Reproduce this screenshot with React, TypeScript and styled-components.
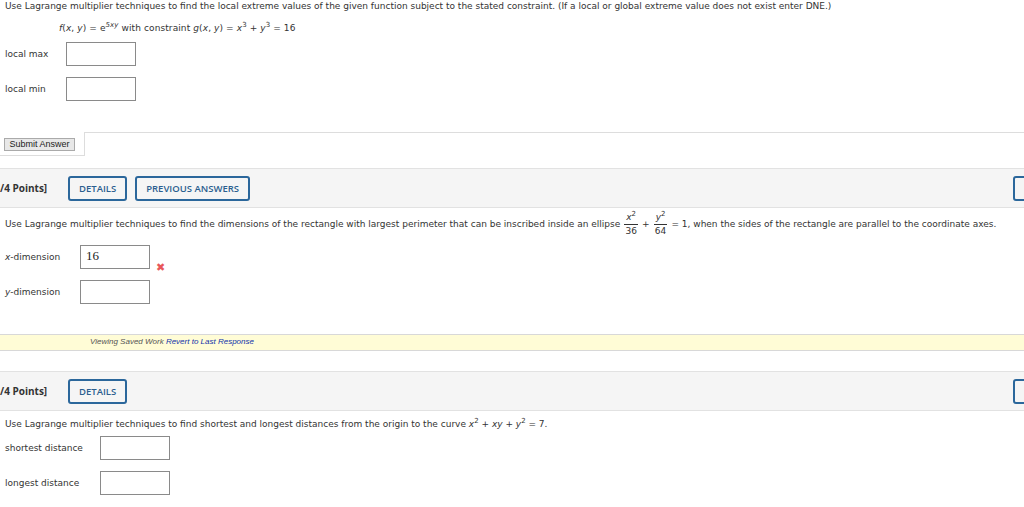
import styled, { createGlobalStyle } from 'styled-components';

const GlobalStyle = createGlobalStyle`
  html, body {
    margin: 0;
    padding: 0;
    background: #fff;
  }
  body {
    font-family: "DejaVu Sans", Verdana, sans-serif;
    color: #333;
    overflow: hidden;
  }
`;

const Page = styled.div`
  width: 1024px;
  height: 507px;
  overflow: hidden;
`;

const Prompt = styled.div<{ $top?: number }>`
  font-size: 9px;
  line-height: 12px;
  padding-left: 5px;
  margin-top: ${p => p.$top ?? 0}px;
  white-space: nowrap;
`;

const Formula = styled.div`
  font-size: 9px;
  line-height: 12px;
  padding-left: 59px;
  margin-top: 10px;
  white-space: nowrap;
  letter-spacing: 0.1px;
`;

const V = styled.i`
  font-style: italic;
`;

const Sup = styled.sup`
  font-size: 7px;
  line-height: 0;
  vertical-align: 4px;
`;

const Answers = styled.div<{ $label: number; $top: number }>`
  display: grid;
  grid-template-columns: ${p => p.$label}px 70px auto;
  row-gap: 11px;
  align-items: center;
  margin-top: ${p => p.$top}px;
  padding-left: 5px;
`;

const Label = styled.div`
  font-size: 9px;
  line-height: 12px;
`;

const Box = styled.div`
  box-sizing: border-box;
  width: 70px;
  height: 24px;
  border: 1px solid #8a8a8a;
  background: #fff;
  font-family: "Liberation Serif", "Times New Roman", serif;
  font-size: 13px;
  line-height: 20px;
  padding-left: 5px;
  color: #222;
`;

const Wrong = styled.span`
  align-self: end;
  margin: 0 0 -4px 6px;
  color: #e8575a;
  font-size: 11px;
  font-weight: bold;
  line-height: 10px;
`;

const SubmitRow = styled.div`
  display: flex;
  margin-top: 31px;
  height: 24px;
`;

const SubmitCell = styled.div`
  box-sizing: border-box;
  display: flex;
  align-items: flex-start;
  width: 85px;
  border-right: 1px solid #ddd;
  border-bottom: 1px solid #ddd;
  padding: 6px 0 0 4px;
`;

const SubmitRest = styled.div`
  flex: 1;
  border-top: 1px solid #ddd;
`;

const SubmitButton = styled.button`
  box-sizing: border-box;
  height: 13px;
  width: 71px;
  padding: 0;
  border: 1px solid #aaa;
  background: #e8e8e8;
  font-family: "Liberation Sans", Arial, sans-serif;
  font-size: 9px;
  line-height: 11px;
  color: #222;
`;

const Band = styled.div<{ $top: number }>`
  box-sizing: border-box;
  display: flex;
  align-items: center;
  height: 40px;
  margin-top: ${p => p.$top}px;
  background: #f5f5f5;
  border-top: 1px solid #e2e2e2;
  border-bottom: 1px solid #e2e2e2;
  overflow: hidden;
  font-family: "Open Sans", sans-serif;
`;

const Points = styled.span`
  font-size: 10px;
  font-weight: 700;
  color: #333;
  width: 68px;
`;

const BlueButton = styled.button<{ $edge?: boolean }>`
  box-sizing: border-box;
  height: 25px;
  padding: 0 9px;
  margin-right: 8px;
  margin-left: ${p => (p.$edge ? 'auto' : '0')};
  ${p => p.$edge && 'margin-right: -40px; width: 51px;'}
  border: 2px solid #2b679b;
  border-radius: 3px;
  background: transparent;
  font-family: "Open Sans", sans-serif;
  font-size: 9.5px;
  font-weight: 600;
  color: #2b5f8f;
`;

const Frac = styled.span`
  display: inline-flex;
  flex-direction: column;
  align-items: center;
  margin: 0 4px;
  line-height: 11px;
`;

const Num = styled.span`
  border-bottom: 1px solid #333;
  padding: 0 2px 1px;
`;

const Den = styled.span`
  padding-top: 1px;
`;

const PromptTall = styled(Prompt)`
  display: flex;
  align-items: center;
  height: 26px;
`;

const SavedBar = styled.div`
  box-sizing: border-box;
  height: 17px;
  margin-top: 30px;
  background: #fffcd6;
  border-top: 1px solid #d8d8d8;
  border-bottom: 1px solid #d8d8d8;
  padding-left: 90px;
  font-family: "Liberation Sans", Arial, sans-serif;
  font-size: 8px;
  font-style: italic;
  line-height: 14px;
  color: #555;
`;

const Revert = styled.span`
  color: #1133aa;
`;

export default function App() {
  return (
    <Page>
      <GlobalStyle />
      <Prompt>
        Use Lagrange multiplier techniques to find the local extreme values of the given function subject to the stated constraint. (If a local or global extreme value does not exist enter DNE.)
      </Prompt>
      <Formula>
        <V>f</V>(<V>x</V>, <V>y</V>) = e<Sup><V>5xy</V></Sup> with constraint <V>g</V>(<V>x</V>, <V>y</V>) = <V>x</V>
        <Sup>3</Sup> + <V>y</V><Sup>3</Sup> = 16
      </Formula>
      <Answers $label={61} $top={8}>
        <Label>local max</Label>
        <Box />
        <span />
        <Label>local min</Label>
        <Box />
        <span />
      </Answers>

      <SubmitRow>
        <SubmitCell>
          <SubmitButton>Submit Answer</SubmitButton>
        </SubmitCell>
        <SubmitRest />
      </SubmitRow>

      <Band $top={12}>
        <Points>/4 Points]</Points>
        <BlueButton>DETAILS</BlueButton>
        <BlueButton>PREVIOUS ANSWERS</BlueButton>
        <BlueButton $edge />
      </Band>

      <PromptTall $top={3}>
        Use Lagrange multiplier techniques to find the dimensions of the rectangle with largest perimeter that can be inscribed inside an ellipse
        <Frac>
          <Num>
            <V>x</V>
            <Sup>2</Sup>
          </Num>
          <Den>36</Den>
        </Frac>
        +
        <Frac>
          <Num>
            <V>y</V>
            <Sup>2</Sup>
          </Num>
          <Den>64</Den>
        </Frac>
        = 1, when the sides of the rectangle are parallel to the coordinate axes.
      </PromptTall>
      <Answers $label={75} $top={8}>
        <Label>
          <V>x</V>-dimension
        </Label>
        <Box>16</Box>
        <Wrong>✖</Wrong>
        <Label>
          <V>y</V>-dimension
        </Label>
        <Box />
        <span />
      </Answers>

      <SavedBar>
        Viewing Saved Work <Revert>Revert to Last Response</Revert>
      </SavedBar>

      <Band $top={20}>
        <Points>/4 Points]</Points>
        <BlueButton>DETAILS</BlueButton>
        <BlueButton $edge />
      </Band>

      <Prompt $top={7}>
        Use Lagrange multiplier techniques to find shortest and longest distances from the origin to the curve <V>x</V>
        <Sup>2</Sup> + <V>xy</V> + <V>y</V>
        <Sup>2</Sup> = 7.
      </Prompt>
      <Answers $label={95} $top={6}>
        <Label>shortest distance</Label>
        <Box />
        <span />
        <Label>longest distance</Label>
        <Box />
        <span />
      </Answers>
    </Page>
  );
}
